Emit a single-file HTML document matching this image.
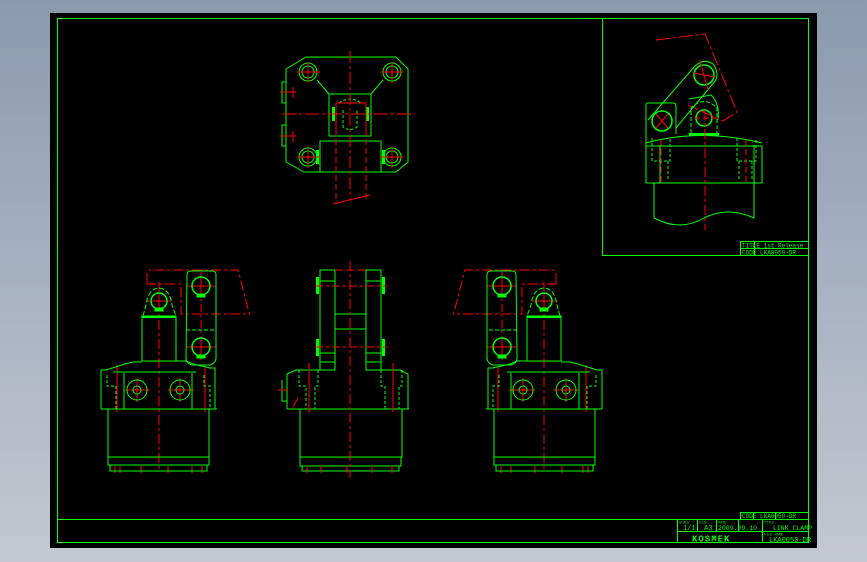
<!DOCTYPE html>
<html><head><meta charset="utf-8"><style>
html,body{margin:0;padding:0;width:867px;height:562px;overflow:hidden;background:linear-gradient(180deg,#8b99ad 0%,#a7b2c1 50%,#c3c8d1 100%);}
svg{position:absolute;left:0;top:0}
text{font-family:"Liberation Mono",monospace;fill:#00ff00}
</style></head><body>
<svg width="867" height="562" viewBox="0 0 867 562">
<defs>
<g id="side" fill="none" stroke="#00ff00" stroke-width="1">
  <!-- red construction -->
  <g stroke="#ff0000">
    <path d="M147 283 V272 L149 270 H238 L250 316" stroke-dasharray="10 3 3 3"/>
    <path d="M146 284 H181 V314 H250" stroke-dasharray="10 3 3 3"/>
    <path d="M159 282 V472" stroke-dasharray="10 3 3 3"/>
    <path d="M201 272 V360" stroke-dasharray="8 3 2 3"/>
    <path d="M186 286 H216 M186 347 H216 M147 301 H171 M201 276 V296 M201 337 V357 M159 291 V311"/>
    <path d="M117 365 V412 M205 365 V412 M137 378 V402 M180 378 V402 M124 390 H150 M168 390 H194"/>
    <path d="M115 466 V473 M120 466 V473 M141 466 V473 M168 466 V473 M192 466 V473 M202 466 V473"/>
  </g>
  <!-- link plate -->
  <path d="M187 275 Q187 271 191 271 H212 Q216 271 216 275 V358 Q216 363 210 365 H192 Q186 363 186 358 Z"/>
  <path d="M186 330 H216" stroke-dasharray="4 2"/>
  <circle cx="201" cy="286" r="9" stroke-width="1.5"/>
  <circle cx="201" cy="347" r="9" stroke-width="1.5"/>
  <rect x="197" y="294" width="8" height="3" fill="#00ff00"/>
  <rect x="197" y="355" width="8" height="3" fill="#00ff00"/>
  <!-- lug -->
  <path d="M143 316 L146 305 Q148 289 159 288 Q170 289 172 305 L176 316" stroke-dasharray="5 2"/>
  <circle cx="159" cy="301" r="8" stroke-width="1.5"/>
  <rect x="155" y="308" width="8" height="3" fill="#00ff00"/>
  <rect x="142" y="316" width="34" height="45"/>
  <path d="M142 317 H176" stroke-width="2"/>
  <!-- flange body -->
  <path d="M101 409 V370 H106 L125 364 L133 362 H142 M176 361 H186 L193 364 L210 368 H215 V409"/>
  <path d="M113 372 H196"/>
  <path d="M101 409 H217"/>
  <path d="M107 375 V386 H116 V409 M204 375 V386 H210 V409" stroke-dasharray="3 2"/>
  <path d="M124 373 V409 M192 373 V409"/>
  <circle cx="137" cy="390" r="10"/><circle cx="137" cy="390" r="4"/>
  <circle cx="180" cy="390" r="10"/><circle cx="180" cy="390" r="4"/>
  <!-- cylinder -->
  <path d="M108 409 V457 H209 V409"/>
  <path d="M108 457 V465 H209 V457"/>
  <path d="M110 465 V471 H207 V465"/>
</g>
</defs>

<rect x="50" y="13" width="767" height="535" fill="#000"/>
<g fill="none" stroke="#00ff00" stroke-width="1" shape-rendering="crispEdges">
  <rect x="57.5" y="18.5" width="751" height="524"/>
  <path d="M602.5 18 V255.5 H809"/>
  <path d="M740.5 241.5 H809 M740.5 241 V255 M740 248.5 H809 M754.5 241 V255"/>
  <path d="M58 519.5 H809 M677.5 519 V543 M677 531.5 H809 M697.5 519 V531 M716.5 519 V531 M738.5 519 V531 M762.5 519 V543 M740.5 512.5 H809 M740.5 512 V519 M753.5 512 V519 M775.5 512 V519"/>
</g>

<!-- side views -->
<use href="#side"/>
<use href="#side" transform="translate(703,0) scale(-1,1)"/>

<!-- middle front view -->
<g fill="none" stroke="#00ff00" stroke-width="1">
  <rect x="320" y="270" width="15" height="100"/>
  <rect x="366" y="270" width="15" height="100"/>
  <path d="M320 281 H335 M366 281 H381 M320 353 H335 M366 353 H381 M320 362 H335 M366 362 H381"/>
  <path d="M335 314 H366 M335 329 H366"/>
  <rect x="316" y="277" width="3" height="17" fill="#00ff00" stroke="none"/>
  <rect x="382" y="277" width="3" height="17" fill="#00ff00" stroke="none"/>
  <rect x="316" y="339" width="3" height="17" fill="#00ff00" stroke="none"/>
  <rect x="382" y="339" width="3" height="17" fill="#00ff00" stroke="none"/>
  <path d="M287 409 V374 L296 370 H320 M381 370 H400 L408 374 V409 M287 409 H409"/>
  <path d="M282 380 V401 H287"/>
  <path d="M299 370 V386 H306 V409 M318 370 V386 H315 V409 M381 370 V386 H385 V409 M402 370 V386 H399 V409" stroke-dasharray="3 2"/>
  <path d="M300 409 V457 H402 V409 M300 457 V466 H401 V457 M302 466 V471 H399 V466"/>
  <g stroke="#ff0000">
    <path d="M350 261 V478" stroke-dasharray="10 3 3 3"/>
    <path d="M315 286 H387 M315 347 H387" stroke-dasharray="8 3 3 3"/>
    <path d="M335 270 H366" stroke-dasharray="8 3"/>
    <path d="M309 363 V413 M393 363 V412 M278 390 H288 M293 407 L298 398"/>
    <path d="M307 466 V473 M321 466 V473 M347 466 V473 M372 466 V473 M392 466 V473"/>
  </g>
</g>

<!-- top view -->
<g fill="none" stroke="#00ff00" stroke-width="1">
  <path d="M306 57 H396 L408 69 V162 L396 172 H304 L286 162 V69 Z"/>
  <path d="M286 82 H282 V103 H286 M286 125 H282 V146 H286"/>
  <circle cx="308" cy="72" r="9"/><circle cx="308" cy="72" r="6"/>
  <circle cx="392" cy="72" r="9"/><circle cx="392" cy="72" r="6"/>
  <circle cx="308" cy="157" r="9"/><circle cx="308" cy="157" r="6"/>
  <circle cx="392" cy="157" r="9"/><circle cx="392" cy="157" r="6"/>
  <path d="M317 80 L329 94 M383 80 L371 94"/>
  <rect x="329" y="94" width="42" height="42"/>
  <rect x="320" y="141" width="61" height="31"/>
  <path d="M343 110 V127 Q350 132 357 127 V110" stroke-dasharray="3 2"/>
  <path d="M339 103 Q350 95 361 103" stroke-dasharray="3 2"/>
  <rect x="332" y="107" width="3" height="14" fill="#00ff00" stroke="none"/>
  <rect x="366" y="107" width="3" height="14" fill="#00ff00" stroke="none"/>
  <rect x="316" y="150" width="3" height="14" fill="#00ff00" stroke="none"/>
  <rect x="382" y="150" width="3" height="14" fill="#00ff00" stroke="none"/>
  <g stroke="#ff0000">
    <path d="M350 51 V200" stroke-dasharray="12 3 3 3"/>
    <path d="M282 114 H415" stroke-dasharray="14 3 3 3"/>
    <path d="M336 103 V203 M366 103 V200" stroke-dasharray="6 3"/>
    <path d="M333 204 L370 195"/>
    <path d="M336 103 H366 V135 M336 103 V130"/>
    <path d="M297 72 H320 M380 72 H404 M297 157 H320 M380 157 H404 M308 62 V83 M392 62 V83 M308 146 V168 M392 146 V168"/>
    <path d="M280 92 H296 M280 136 H296 M293 87 V98 M293 131 V142"/>
  </g>
</g>

<!-- right top view -->
<g fill="none" stroke="#00ff00" stroke-width="1">
  <path d="M646 183 V105 Q646 103 648 103 H673 Q676 103 676 106 V134"/>
  <path d="M648 120 L695 66 Q704 58 713 64 Q719 71 716 80 L676 128"/>
  <path d="M689 99 L711 95 Q720 104 718 120"/>
  <circle cx="704" cy="75" r="10" stroke-width="1.5"/>
  <circle cx="662" cy="121" r="10" stroke-width="1.5"/>
  <circle cx="704" cy="118" r="8" stroke-width="1.5"/>
  <path d="M691 133 V108 Q704 95 717 108 V133" stroke-dasharray="4 2"/>
  <rect x="689" y="133" width="30" height="3" fill="#00ff00" stroke="none"/>
  <path d="M646 143 Q700 128 762 143 M646 146 H762 V183 H646 M660 145 V183 M754 145 V183"/>
  <path d="M652 138 V161 H670 V138 M737 138 V161 H756 V138 M660 161 V180 M668 161 V180 M739 161 V180 M752 161 V180" stroke-dasharray="3 2"/>
  <path d="M654 183 V218 Q680 232 704 218 Q728 206 754 218 V183"/>
  <g stroke="#ff0000">
    <path d="M656 40 L705 34 L737 112 L723 121 L688 105" stroke-dasharray="14 3 3 3"/>
    <path d="M700 60 L708 90 M694 73 L714 77 M656 114 L668 128 M668 114 L656 128"/>
    <path d="M705 110 V230" stroke-dasharray="10 3 3 3"/>
    <path d="M694 118 H716 M661 140 V185 M746 140 V185" stroke-dasharray="6 3"/>
  </g>
</g>

<!-- texts -->
<g font-size="6">
  <text x="742" y="247.5" font-size="6">TITLE 1st Release</text>
  <text x="742" y="254.5" font-size="6">CODE LKA0050-DR</text>
  <text x="742" y="518" font-size="6">CODE LKA0050-DR</text>
  <text x="679" y="523.5" font-size="3.5">SCALE</text>
  <text x="699" y="523.5" font-size="3.5">SIZE</text>
  <text x="718" y="523.5" font-size="3.5">DATE</text>
  <text x="764" y="523.5" font-size="3.5">TITLE</text>
  <text x="764" y="535.5" font-size="3.5">FILE NAME</text>
  <text x="683" y="530" font-size="7">1/1</text>
  <text x="704" y="530" font-size="7">A3</text>
  <text x="718" y="530" font-size="6.5">2009.09.10</text>
  <text x="773" y="530" font-size="6.5">LINK CLAMP</text>
  <text x="769" y="542" font-size="7">LKA0050-DR</text>
  <text x="692" y="541.5" font-size="9" font-weight="bold" letter-spacing="1">KOSMEK</text>
</g>
</svg>
</body></html>
